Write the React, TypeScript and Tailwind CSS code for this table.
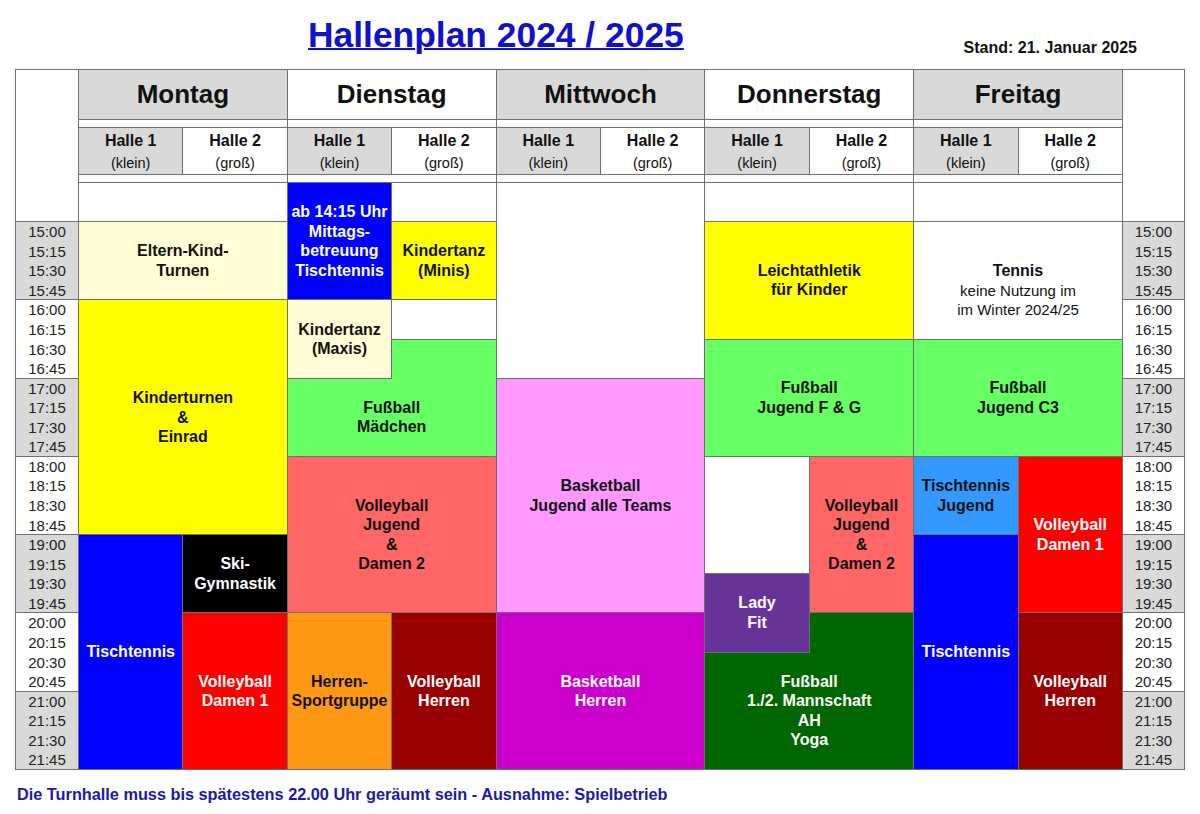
import React from "react";

type Block = {
  pos: string;
  bg: string;
  lines?: string;
  light?: boolean;
  pad?: string;
  node?: React.ReactNode;
};

const days = [
  { name: "Montag", pos: "col-start-2", gray: true },
  { name: "Dienstag", pos: "col-start-4", gray: false },
  { name: "Mittwoch", pos: "col-start-6", gray: true },
  { name: "Donnerstag", pos: "col-start-8", gray: false },
  { name: "Freitag", pos: "col-start-10", gray: true },
];

const halls = [
  "col-start-2", "col-start-3", "col-start-4", "col-start-5", "col-start-6",
  "col-start-7", "col-start-8", "col-start-9", "col-start-10", "col-start-11",
];

const hourRows = [
  "row-start-7", "row-start-11", "row-start-15", "row-start-19",
  "row-start-23", "row-start-27", "row-start-31",
];

// order matters: overlapping blocks (Maxis, Lady Fit) come after the block below them
const blocks: Block[] = [
  // Montag
  { pos: "col-start-2 col-span-2 row-start-5 row-span-2", bg: "bg-white" },
  { pos: "col-start-2 col-span-2 row-start-7 row-span-4", bg: "bg-[#fffcd6]", lines: "Eltern-Kind-\nTurnen" },
  { pos: "col-start-2 col-span-2 row-start-11 row-span-12", bg: "bg-[#ffff00]", lines: "Kinderturnen\n&\nEinrad" },
  { pos: "col-start-2 row-start-23 row-span-12", bg: "bg-[#0000ff]", lines: "Tischtennis", light: true },
  { pos: "col-start-3 row-start-23 row-span-4", bg: "bg-black", lines: "Ski-\nGymnastik", light: true },
  { pos: "col-start-3 row-start-27 row-span-8", bg: "bg-[#ff0000]", lines: "Volleyball\nDamen 1", light: true },

  // Dienstag
  { pos: "col-start-4 row-start-5 row-span-6", bg: "bg-[#0000ff]", lines: "ab 14:15 Uhr\nMittags-\nbetreuung\nTischtennis", light: true },
  { pos: "col-start-5 row-start-5 row-span-2", bg: "bg-white" },
  { pos: "col-start-5 row-start-7 row-span-4", bg: "bg-[#ffff00]", lines: "Kindertanz\n(Minis)" },
  { pos: "col-start-5 row-start-11 row-span-2", bg: "bg-white" },
  { pos: "col-start-4 col-span-2 row-start-13 row-span-6", bg: "bg-[#66ff66]", lines: "Fußball\nMädchen", pad: "pt-[39px]" },
  { pos: "col-start-4 row-start-11 row-span-4", bg: "bg-[#fffcd6]", lines: "Kindertanz\n(Maxis)" },
  { pos: "col-start-4 col-span-2 row-start-19 row-span-8", bg: "bg-[#ff6666]", lines: "Volleyball\nJugend\n&\nDamen 2" },
  { pos: "col-start-4 row-start-27 row-span-8", bg: "bg-[#ff9914]", lines: "Herren-\nSportgruppe" },
  { pos: "col-start-5 row-start-27 row-span-8", bg: "bg-[#990000]", lines: "Volleyball\nHerren", light: true },

  // Mittwoch
  { pos: "col-start-6 col-span-2 row-start-5 row-span-10", bg: "bg-white" },
  { pos: "col-start-6 col-span-2 row-start-15 row-span-12", bg: "bg-[#ff99ff]", lines: "Basketball\nJugend alle Teams" },
  { pos: "col-start-6 col-span-2 row-start-27 row-span-8", bg: "bg-[#cc00cc]", lines: "Basketball\nHerren", light: true },

  // Donnerstag
  { pos: "col-start-8 col-span-2 row-start-5 row-span-2", bg: "bg-white" },
  { pos: "col-start-8 col-span-2 row-start-7 row-span-6", bg: "bg-[#ffff00]", lines: "Leichtathletik\nfür Kinder" },
  { pos: "col-start-8 col-span-2 row-start-13 row-span-6", bg: "bg-[#66ff66]", lines: "Fußball\nJugend F & G" },
  { pos: "col-start-8 row-start-19 row-span-6", bg: "bg-white" },
  { pos: "col-start-9 row-start-19 row-span-8", bg: "bg-[#ff6666]", lines: "Volleyball\nJugend\n&\nDamen 2" },
  { pos: "col-start-8 col-span-2 row-start-27 row-span-8", bg: "bg-[#006600]", lines: "Fußball\n1./2. Mannschaft\nAH\nYoga", light: true, pad: "pt-[39px]" },
  { pos: "col-start-8 row-start-25 row-span-4", bg: "bg-[#663399]", lines: "Lady\nFit", light: true },

  // Freitag
  { pos: "col-start-10 col-span-2 row-start-5 row-span-2", bg: "bg-white" },
  {
    pos: "col-start-10 col-span-2 row-start-7 row-span-6",
    bg: "bg-white",
    pad: "pt-[20px]",
    node: (
      <>
        <span className="font-bold text-[16px]">Tennis</span>
        <span className="text-[15px] font-normal">keine Nutzung im</span>
        <span className="text-[15px] font-normal">im Winter 2024/25</span>
      </>
    ),
  },
  { pos: "col-start-10 col-span-2 row-start-13 row-span-6", bg: "bg-[#66ff66]", lines: "Fußball\nJugend C3" },
  { pos: "col-start-10 row-start-19 row-span-4", bg: "bg-[#3399ff]", lines: "Tischtennis\nJugend" },
  { pos: "col-start-10 row-start-23 row-span-12", bg: "bg-[#0000ff]", lines: "Tischtennis", light: true },
  { pos: "col-start-11 row-start-19 row-span-8", bg: "bg-[#ff0000]", lines: "Volleyball\nDamen 1", light: true },
  { pos: "col-start-11 row-start-27 row-span-8", bg: "bg-[#990000]", lines: "Volleyball\nHerren", light: true },
];

const line = "border-r border-b border-[#6f6f6f]";

function TimeColumn({ col }: { col: string }) {
  return (
    <>
      <div className={`${col} row-start-1 row-span-6 bg-white ${line}`} />
      {hourRows.map((r, i) => {
        const h = 15 + i;
        return (
          <div
            key={r}
            className={`${col} ${r} row-span-4 flex flex-col items-center ${line} ${
              i % 2 === 0 ? "bg-[#d9d9d9]" : "bg-white"
            }`}
          >
            {["00", "15", "30", "45"].map((m) => (
              <span key={m} className="leading-[19.57px] text-[15px] text-[#222]">
                {h}:{m}
              </span>
            ))}
          </div>
        );
      })}
    </>
  );
}

export default function App() {
  return (
    <div
      className="w-[1200px] h-[814px] bg-white px-[15px]"
      style={{ fontFamily: '"Liberation Sans", Arial, sans-serif' }}
    >
      {/* Title */}
      <div className="flex items-start h-[69px]">
        <h1 className="ml-[293px] mt-[18px] text-[35.4px] leading-none font-bold text-[#1111cc] underline decoration-2">
          Hallenplan 2024 / 2025
        </h1>
        <div className="ml-auto mr-[48px] mt-[40px] text-[16px] leading-none font-bold text-[#111]">
          Stand: 21. Januar 2025
        </div>
      </div>

      {/* Plan */}
      <div className="grid w-fit grid-cols-[63px_repeat(10,104.4px)_62px] grid-rows-[50px_8px_47px_8px_repeat(30,19.57px)] border-t border-l border-[#6f6f6f]">
        <TimeColumn col="col-start-1" />
        <TimeColumn col="col-start-12" />

        {days.map((d) => (
          <React.Fragment key={d.name}>
            <div
              className={`${d.pos} col-span-2 row-start-1 flex items-center justify-center text-[26px] font-bold text-[#111] ${line} ${
                d.gray ? "bg-[#d9d9d9]" : "bg-white"
              }`}
            >
              {d.name}
            </div>
            <div className={`${d.pos} col-span-2 row-start-2 bg-white ${line}`} />
            <div className={`${d.pos} col-span-2 row-start-4 bg-white ${line}`} />
          </React.Fragment>
        ))}

        {halls.map((c, i) => (
          <div
            key={c}
            className={`${c} row-start-3 flex flex-col items-center justify-center pt-[2px] text-[#111] ${line} ${
              i % 2 === 0 ? "bg-[#d9d9d9]" : "bg-white"
            }`}
          >
            <span className="text-[16px] font-bold leading-[22px]">Halle {i % 2 === 0 ? 1 : 2}</span>
            <span className="text-[14.5px] leading-[22px]">{i % 2 === 0 ? "(klein)" : "(groß)"}</span>
          </div>
        ))}

        {blocks.map((b, i) => (
          <div
            key={i}
            className={`${b.pos} ${b.bg} ${line} flex flex-col items-center justify-center text-center leading-[19.5px] ${
              b.pad ?? ""
            } ${b.light ? "text-white" : "text-[#111]"}`}
          >
            {b.node ??
              (b.lines && (
                <span className="whitespace-pre-line text-[16px] font-bold">{b.lines}</span>
              ))}
          </div>
        ))}
      </div>

      {/* Footer */}
      <p className="mt-[16px] ml-[2px] text-[16.3px] leading-none font-bold text-[#1a1aa6]">
        Die Turnhalle muss bis spätestens 22.00 Uhr geräumt sein - Ausnahme: Spielbetrieb
      </p>
    </div>
  );
}
